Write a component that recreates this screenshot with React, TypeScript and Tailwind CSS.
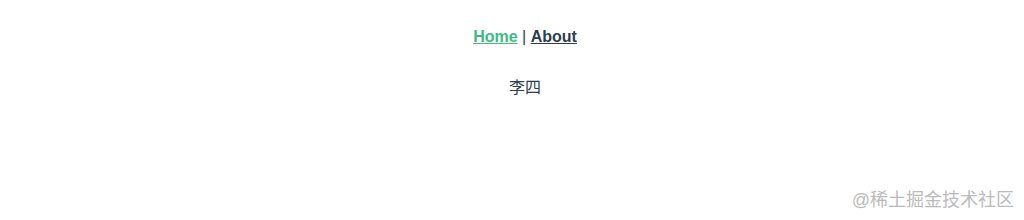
export default function App() {
  return (
    <div className="relative h-[220px] w-full bg-white pl-[26px] text-center text-[#2c3e50] [font-family:'Liberation_Sans',Arial,'Noto_Sans_CJK_SC',sans-serif]">
      <div className="pt-[25px] pb-[27px] text-base">
        <a href="#" className="font-bold text-[#42b983] underline">Home</a>
        <span> | </span>
        <a href="#" className="font-bold text-[#2c3e50] underline">About</a>
      </div>
      <div className="text-base">李四</div>
      <div className="absolute bottom-[6px] right-[10px] text-[18px] text-[#bbbbbb]">@稀土掘金技术社区</div>
    </div>
  );
}
